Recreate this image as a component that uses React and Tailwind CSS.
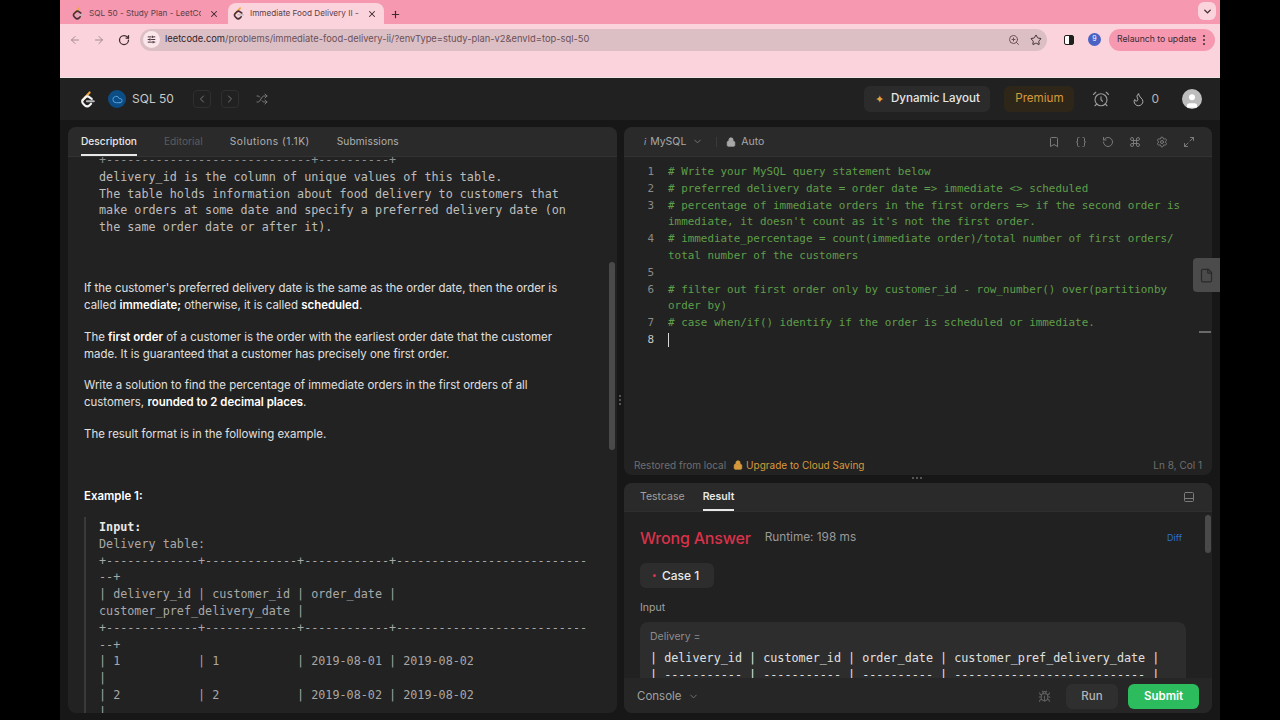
import { ArrowLeft, ArrowRight, RotateCw, Star, ZoomIn, ChevronDown, ChevronLeft, ChevronRight, Shuffle, AlarmClock, Bookmark, Braces, RotateCcw, Command, Settings, Maximize2, Lock, Bug, PanelBottom, File, X, Plus, SlidersHorizontal, User, Cloud, Flame } from 'lucide-react';

const sans = 'font-["Inter","Liberation_Sans",sans-serif]';
const mono = 'font-["DejaVu_Sans_Mono",monospace]';

function LcLogo({ size = 16, dark = false }) {
  const main = dark ? '#4a3036' : '#f4f4f4';
  return (
    <svg width={size} height={size} viewBox="0 0 24 24" fill="none" strokeLinecap="round">
      <path d="M15 2 5 13" stroke="#f0a93a" strokeWidth="3" />
      <path d="M5 13c-1 2-1 3 1 5l2 2c2 2 5 2 7 0l2-2" stroke={main} strokeWidth="3" />
      <path d="M6 12l3-3c2-2 4-2 6 0l3 2" stroke={main} strokeWidth="3" />
      <path d="M11 14.5h10" stroke="#b9b9b9" strokeWidth="2.6" />
    </svg>
  );
}

function BrowserTab({ title, active }) {
  return (
    <div className={`flex items-center h-[21px] pr-[7px] rounded-t-lg ${active ? 'w-[156px] pl-[4px] bg-[#fbd3dc] ml-[2px]' : 'w-[163px] pl-[8px] ml-[2px]'}`}>
      <div className="shrink-0"><LcLogo size={13} dark /></div>
      <span className="pl-[5px] flex-1 overflow-hidden whitespace-nowrap text-[8.2px] text-[#5b4048]">{title}</span>
      <X size={10} strokeWidth={2.5} className="shrink-0 ml-[8px] text-[#3c2a30]" />
    </div>
  );
}

function BrowserChrome() {
  return (
    <div className={`${sans} shrink-0`}>
      <div className="h-6 bg-[#f598b0] flex items-end pl-[1px] pr-1 relative">
        <BrowserTab title="SQL 50 - Study Plan - LeetCode" />
        <BrowserTab title="Immediate Food Delivery II - LeetCode" active />
        <Plus size={11} strokeWidth={2.5} className="ml-[6px] mb-[4px] text-[#3c2a30]" />
        <div className="ml-auto mb-1 w-[18px] h-[18px] rounded-md bg-[#fbd3dc] flex items-center justify-center">
          <ChevronDown size={11} strokeWidth={3} className="text-[#3c2a30]" />
        </div>
      </div>
      <div className="h-[54px] bg-[#fbd3dc] border-b border-[#efe3e6]">
        <div className="h-[31px] flex items-center pl-[9px] pr-[3px]">
          <ArrowLeft size={12} className="text-[#a58a92]" />
          <ArrowRight size={12} className="ml-3 text-[#a58a92]" />
          <RotateCw size={12} strokeWidth={2.5} className="ml-[13px] text-[#3c2a30]" />
          <div className="ml-[10px] w-[907px] h-[22px] rounded-full bg-[#dcbfc5] flex items-center pl-[3px] pr-[5px]">
            <div className="w-[17px] h-[17px] rounded-full bg-[#fbe6eb] flex items-center justify-center">
              <SlidersHorizontal size={9} strokeWidth={2.5} className="text-[#3c2a30]" />
            </div>
            <span className="ml-[5px] text-[9.35px] text-[#6b5057]"><span className="text-[#33252a]">leetcode.com</span>/problems/immediate-food-delivery-ii/?envType=study-plan-v2&envId=top-sql-50</span>
            <ZoomIn size={12} className="ml-auto text-[#6b5057]" />
            <Star size={12} className="ml-[10px] text-[#3c2a30]" />
          </div>
          <div className="ml-[17px] w-[10px] h-[10px] border border-[#1f1f1f] bg-[linear-gradient(90deg,#fff_50%,#1f1f1f_50%)] rounded-[2px]" />
          <div className="ml-[14px] w-[13px] h-[13px] rounded-full bg-[#4a62c4] text-[7px] text-white flex items-center justify-center">9</div>
          <div className="ml-[8px] w-[106px] h-[22px] rounded-full bg-[#f598b0] flex items-center pl-2 pr-[10px] text-[8.7px] text-[#3c2a30]">
            Relaunch to update
            <span className="ml-auto flex flex-col gap-[2px]">
              <i className="w-[2px] h-[2px] rounded-full bg-[#3c2a30]" />
              <i className="w-[2px] h-[2px] rounded-full bg-[#3c2a30]" />
              <i className="w-[2px] h-[2px] rounded-full bg-[#3c2a30]" />
            </span>
          </div>
        </div>
      </div>
    </div>
  );
}

function TopNav() {
  return (
    <div className={`${sans} h-[42px] shrink-0 bg-[#212121] flex items-center pl-[19px] pr-[18px]`}>
      <LcLogo size={17} />
      <div className="ml-[12px] w-[18px] h-[18px] rounded-full bg-[#0d4d86] flex items-center justify-center">
        <Cloud size={11} className="text-[#58a6e0]" />
      </div>
      <span className="ml-[6px] text-[12px] text-[#c9c9c9]">SQL 50</span>
      <div className="ml-[19px] w-[18px] h-[18px] rounded border border-[#2f2f2f] flex items-center justify-center">
        <ChevronLeft size={12} className="text-[#777]" />
      </div>
      <div className="ml-[10px] w-[18px] h-[18px] rounded border border-[#2f2f2f] flex items-center justify-center">
        <ChevronRight size={12} className="text-[#777]" />
      </div>
      <Shuffle size={12} className="ml-[17px] text-[#777]" />
      <div className="ml-auto w-[126px] h-[26px] rounded-md bg-[#2b2b2b] flex items-center justify-center gap-[7px] text-[11.6px] font-medium text-[#e6e6e6]">
        <span className="text-[11px] text-[#e2a23f]">✦</span>Dynamic Layout
      </div>
      <div className="ml-[14px] w-[70px] h-[26px] rounded-md bg-[#2e2719] flex items-center justify-center text-[11.6px] text-[#d69a3c]">Premium</div>
      <AlarmClock size={18} strokeWidth={1.5} className="ml-[18px] text-[#9a9a9a]" />
      <Flame size={15} strokeWidth={1.5} className="ml-[21px] text-[#b5b5b5]" />
      <span className="ml-[5px] text-[12px] text-[#b5b5b5]">0</span>
      <div className="ml-[23px] w-[20px] h-[20px] rounded-full bg-[#bdbdbd] flex items-center justify-center overflow-hidden">
        <User size={18} fill="#fff" strokeWidth={0} className="mt-1" />
      </div>
    </div>
  );
}

function Pre({ children, className = '' }) {
  return <div className={`${mono} whitespace-pre text-[11.75px] leading-[16.8px] ${className}`}>{children}</div>;
}

function DescriptionPanel() {
  return (
    <div className="w-[549px] rounded-lg overflow-hidden bg-[#222222] flex flex-col relative">
      <div className={`${sans} h-[30px] shrink-0 bg-[#2a2a2a] flex items-center gap-[27px] pl-[13px] text-[10.2px] border-b border-[#333]`}>
        <span className="relative h-full flex items-center font-medium text-[#e8e8e8]">
          Description
          <i className="absolute left-0 right-0 bottom-0 h-[2px] bg-[#e8e8e8]" />
        </span>
        <span className="text-[#5c5c5c]">Editorial</span>
        <span className="tracking-[0.5px] text-[#b0b0b0]">Solutions (1.1K)</span>
        <span className="tracking-[0.1px] text-[#b0b0b0]">Submissions</span>
      </div>
      <div className="flex-1 overflow-hidden pl-[16px] pr-[30px]">
        <div className="pl-[15px] -mt-[5px] text-[#bdbdbd]">
          <Pre className="text-[#8f8f8f]">{'+-----------------------------+----------+'}</Pre>
          <Pre>{`delivery_id is the column of unique values of this table.
The table holds information about food delivery to customers that
make orders at some date and specify a preferred delivery date (on
the same order date or after it).`}</Pre>
        </div>
        <div className={`${sans} mt-[44px] text-[11.45px] leading-[17px] text-[#e0e0e0]`}>
          <p>If the customer's preferred delivery date is the same as the order date, then the order is called <b className="font-semibold text-white">immediate;</b> otherwise, it is called <b className="font-semibold text-white">scheduled</b>.</p>
          <p className="mt-[15px]">The <b className="font-semibold text-white">first order</b> of a customer is the order with the earliest order date that the customer made. It is guaranteed that a customer has precisely one first order.</p>
          <p className="mt-[14px]">Write a solution to find the percentage of immediate orders in the first orders of all customers, <b className="font-semibold text-white">rounded to 2 decimal places</b>.</p>
          <p className="mt-[15px]">The result format is in the following example.</p>
          <p className="mt-[45px] font-semibold text-white">Example 1:</p>
        </div>
        <div className="mt-[12px] border-l-2 border-[#3a3a3a] pl-[13px] pt-[2px] text-[#a8a8a8]">
          <Pre className="font-semibold text-[#e8e8e8]">Input:</Pre>
          <Pre>{`Delivery table:
+-------------+-------------+------------+---------------------------
--+
| delivery_id | customer_id | order_date | 
customer_pref_delivery_date |
+-------------+-------------+------------+---------------------------
--+
| 1           | 1           | 2019-08-01 | 2019-08-02                  
|
| 2           | 2           | 2019-08-02 | 2019-08-02                  
|
| 3           | 1           | 2019-08-11 | 2019-08-12                  `}</Pre>
        </div>
      </div>
      <div className="absolute right-[2px] top-[135px] w-[6px] h-[188px] rounded bg-[#4a4a4a]" />
    </div>
  );
}

const codeRows = [
  [1, ['# Write your MySQL query statement below']],
  [2, ['# preferred delivery date = order date => immediate <> scheduled']],
  [3, ['# percentage of immediate orders in the first orders => if the second order is', "immediate, it doesn't count as it's not the first order."]],
  [4, ['# immediate_percentage = count(immediate order)/total number of first orders/', 'total number of the customers']],
  [5, ['']],
  [6, ['# filter out first order only by customer_id - row_number() over(partitionby', 'order by)']],
  [7, ['# case when/if() identify if the order is scheduled or immediate.']],
];

function CodeEditor() {
  return (
    <div className="h-[348px] shrink-0 rounded-lg overflow-hidden bg-[#222222] flex flex-col relative">
      <div className={`${sans} h-[30px] shrink-0 bg-[#2a2a2a] border-b border-[#333] flex items-center pl-[20px] pr-[17px] text-[10.5px] text-[#a8a8a8]`}>
        <span className="italic text-[9px] mr-[4px]">i</span>MySQL
        <ChevronDown size={11} className="ml-[6px] text-[#777]" />
        <i className="ml-[13px] w-px h-[10px] bg-[#3a3a3a]" />
        <Lock size={10} fill="#a8a8a8" className="ml-[9px]" />
        <span className="ml-[5px]">Auto</span>
        <div className="ml-auto flex items-center gap-[15px] text-[#7a7a7a]">
          <Bookmark size={12} />
          <Braces size={12} />
          <RotateCcw size={12} />
          <Command size={12} />
          <Settings size={12} />
          <Maximize2 size={12} />
        </div>
      </div>
      <div className={`${mono} flex-1 pt-[7px] text-[10.92px] leading-[16.8px] text-[#5f9e4a]`}>
        {codeRows.map(([n, lines]) => (
          <div key={n} className="flex">
            <span className="w-[30px] text-right text-[#8a8a8a]">{n}</span>
            <div className="ml-[14px] whitespace-pre">
              {lines.map((l, i) => <div key={i} className="h-[16.8px]">{l}</div>)}
            </div>
          </div>
        ))}
        <div className="flex">
          <span className="w-[30px] text-right text-[#c8c8c8]">8</span>
          <i className="ml-[14px] w-px h-[14px] mt-[1px] bg-[#d8d8d8]" />
        </div>
      </div>
      <div className={`${sans} h-[20px] shrink-0 flex items-center pl-[10px] pr-[10px] text-[10px] text-[#6f6f6f]`}>
        Restored from local
        <Lock size={10} fill="#d69a3c" className="ml-[7px] text-[#d69a3c]" />
        <span className="ml-[3px] text-[#d69a3c]">Upgrade to Cloud Saving</span>
        <span className="ml-auto">Ln 8, Col 1</span>
      </div>
      <div className="absolute right-[1px] top-[204px] w-[12px] h-[2px] bg-[#6a6a6a]" />
    </div>
  );
}

function ResultPanel() {
  return (
    <div className="h-[230px] mt-2 rounded-lg overflow-hidden bg-[#212121] flex flex-col relative">
      <div className={`${sans} h-[29px] shrink-0 bg-[#2a2a2a] flex items-center gap-[18px] pl-[16px] pr-[17px] text-[10.5px] border-b border-[#2f2f2f]`}>
        <span className="text-[#a0a0a0]">Testcase</span>
        <span className="relative h-full flex items-center font-semibold text-[#e8e8e8]">
          Result
          <i className="absolute left-0 right-0 bottom-0 h-[2px] bg-[#e8e8e8]" />
        </span>
        <PanelBottom size={12} className="ml-auto text-[#7a7a7a]" />
      </div>
      <div className={`${sans} flex-1 overflow-hidden pl-[16px] pr-[26px]`}>
        <div className="mt-[14px] flex items-center">
          <span className="text-[16px] font-medium text-[#d8324a] tracking-[-0.2px]">Wrong Answer</span>
          <span className="ml-[14px] text-[11.8px] text-[#9a9a9a]">Runtime: 198 ms</span>
          <span className="ml-auto mr-[4px] text-[9px] text-[#2f6fd0]">Diff</span>
        </div>
        <div className="mt-[13px] w-[74px] h-[25px] rounded-md bg-[#2d2d2d] flex items-center pl-[13px] text-[12px] font-medium text-[#e8e8e8]">
          <i className="w-[3px] h-[3px] rounded-full bg-[#d8324a] mr-[6px]" />Case 1
        </div>
        <div className="mt-[12px] text-[10.5px] text-[#a0a0a0]">Input</div>
        <div className="mt-[6px] h-[90px] rounded-lg bg-[#2d2d2d] pl-[10px] pt-[7px]">
          <div className="text-[10.5px] text-[#8c8c8c]">Delivery =</div>
          <div className={`${mono} mt-[5px] whitespace-pre text-[11.75px] leading-[17px] text-[#e0e0e0]`}>
            {`| delivery_id | customer_id | order_date | customer_pref_delivery_date |
| ----------- | ----------- | ---------- | --------------------------- |`}
          </div>
        </div>
      </div>
      <div className={`${sans} h-[35px] pt-[2px] shrink-0 bg-[#262626] flex items-center pl-[13px] pr-[13px]`}>
        <span className="text-[11.5px] text-[#a0a0a0]">Console</span>
        <ChevronDown size={11} className="ml-[6px] text-[#777]" />
        <Bug size={13} className="ml-auto text-[#5f5f5f]" />
        <div className="ml-[15px] w-[52px] h-[25px] rounded-md bg-[#2f2f2f] flex items-center justify-center text-[11.5px] font-medium text-[#b5b5b5]">Run</div>
        <div className="ml-[10px] w-[71px] h-[25px] rounded-md bg-[#2cbb5d] flex items-center justify-center text-[11.5px] font-semibold text-white">Submit</div>
      </div>
      <div className="absolute right-[1px] top-[32px] w-[6px] h-[38px] rounded bg-[#4a4a4a]" />
    </div>
  );
}

export default function App() {
  return (
    <div className="w-[1280px] h-[720px] bg-black flex justify-center overflow-hidden">
      <div className="w-[1160px] h-full flex flex-col bg-[#171717]">
        <BrowserChrome />
        <TopNav />
        <div className="flex-1 min-h-0 flex pl-2 pt-[7px] pb-[7px] relative">
          <DescriptionPanel />
          <div className="ml-[7px] w-[588px] flex flex-col">
            <CodeEditor />
            <ResultPanel />
          </div>
          <div className="absolute right-0 top-[138px] w-[27px] h-[34px] rounded-l bg-[#4b4b4b] flex items-center justify-center">
            <File size={15} className="text-[#2a2a2a]" />
          </div>
          {/* resize handles */}
          <div className="absolute left-[559px] top-[275px] flex flex-col gap-[2px]">
            <i className="w-[2px] h-[2px] bg-[#555]" />
            <i className="w-[2px] h-[2px] bg-[#555]" />
            <i className="w-[2px] h-[2px] bg-[#555]" />
          </div>
          <div className="absolute left-[852px] top-[357px] flex gap-[2px]">
            <i className="w-[2px] h-[2px] bg-[#555]" />
            <i className="w-[2px] h-[2px] bg-[#555]" />
            <i className="w-[2px] h-[2px] bg-[#555]" />
          </div>
        </div>
      </div>
    </div>
  );
}
